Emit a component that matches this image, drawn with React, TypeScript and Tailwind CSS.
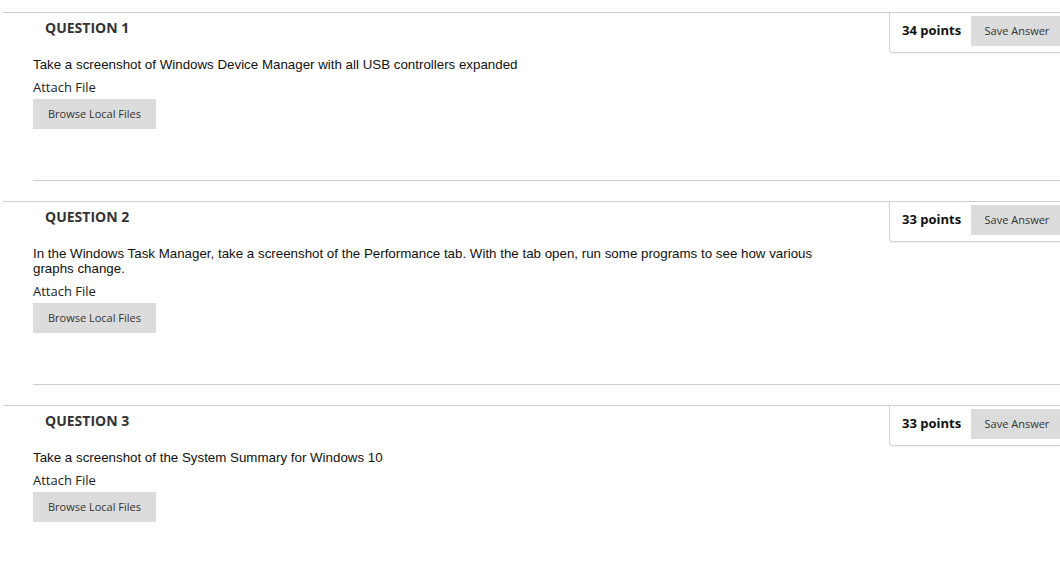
import React from "react";

type Q = { n: number; pts: number; text: string };

const qs: Q[] = [
  { n: 1, pts: 34, text: "Take a screenshot of Windows Device Manager with all USB controllers expanded" },
  {
    n: 2,
    pts: 33,
    text: "In the Windows Task Manager, take a screenshot of the Performance tab. With the tab open, run some programs to see how various graphs change.",
  },
  { n: 3, pts: 33, text: "Take a screenshot of the System Summary for Windows 10" },
];

const os = { fontFamily: '"Open Sans", "Liberation Sans", sans-serif' };
const ar = { fontFamily: '"Liberation Sans", Arial, sans-serif' };

function Question({ q, last }: { q: Q; last: boolean }) {
  return (
    <div className="ml-[3px] border-t border-[#cfcfcf]">
      <div className="flex justify-between h-[40px]">
        <h3 className="pl-[42px] pt-[5px] text-[14px] leading-[20px] font-bold text-[#333]" style={os}>
          QUESTION {q.n}
        </h3>
        <div className="w-[171px] h-[40px] border-l border-b border-[#d4d4d4] rounded-bl-[4px] shadow-[0_1px_1px_rgba(0,0,0,0.06)] flex items-start">
          <span className="w-[81px] pl-[12px] pt-[8px] text-[13px] leading-[18px] font-bold text-[#111]" style={os}>
            {q.pts} points
          </span>
          <button
            className="mt-[3px] w-[90px] h-[30px] bg-[#dcdcdc] text-[11px] text-[#333] text-left pl-[14px]"
            style={os}
          >
            Save Answer
          </button>
        </div>
      </div>
      <div className="pl-[30px]">
        <p className="mt-[4px] max-w-[815px] text-[13.33px] leading-[15px] text-[#111]" style={ar}>
          {q.text}
        </p>
        <div className="mt-[6px] text-[13px] leading-[18px] text-[#222]" style={os}>
          Attach File
        </div>
        <button className="mt-[3px] w-[123px] h-[30px] bg-[#dcdcdc] text-[11px] text-[#333]" style={os}>
          Browse Local Files
        </button>
        <div className={last ? "h-[40px]" : "mt-[51px] mb-[20px] border-t border-[#cfcfcf]"} />
      </div>
    </div>
  );
}

export default function App() {
  return (
    <div className="w-[1060px] h-[569px] bg-white pt-[12px] overflow-hidden">
      {qs.map((q, i) => (
        <Question key={q.n} q={q} last={i === qs.length - 1} />
      ))}
    </div>
  );
}
